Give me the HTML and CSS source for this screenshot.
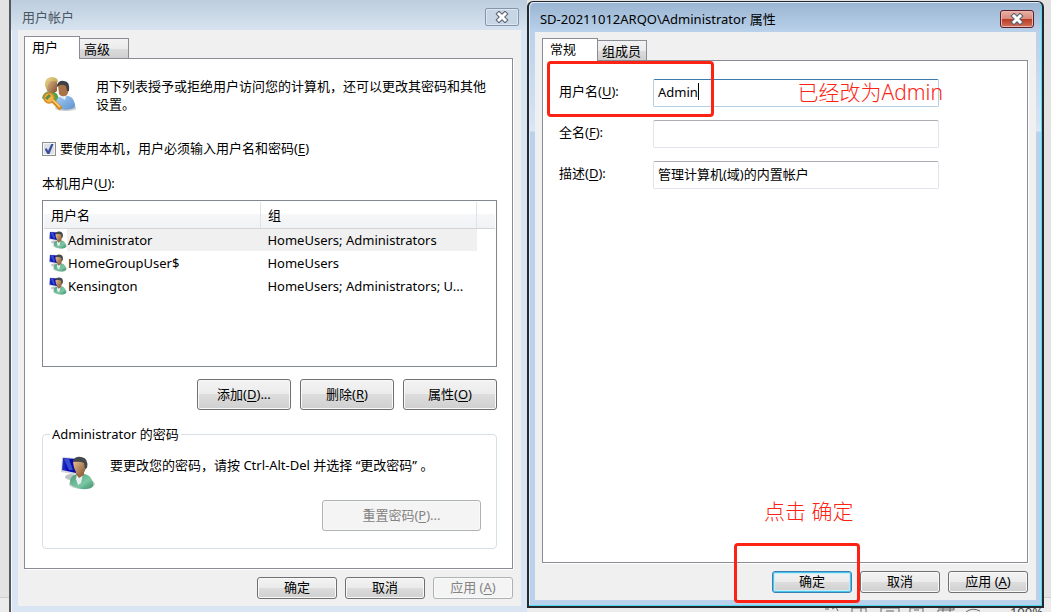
FILE: index.html
```html
<!DOCTYPE html>
<html lang="zh-CN">
<head>
<meta charset="utf-8">
<title>用户帐户</title>
<link rel="stylesheet" href="styles.css">
</head>
<body>
<svg class="defs" width="0" height="0" aria-hidden="true">
  <defs>
    <linearGradient id="screen" x1="0" y1="0" x2="1" y2="0"><stop offset="0" stop-color="#2338b8"/><stop offset=".35" stop-color="#0a10c0"/><stop offset="1" stop-color="#0508a0"/></linearGradient>
    <linearGradient id="skin" x1="0" y1="0" x2="1" y2="1"><stop offset="0" stop-color="#f0c898"/><stop offset="1" stop-color="#80502c"/></linearGradient>
    <linearGradient id="shirt" x1="0" y1="0" x2="1" y2="1"><stop offset="0" stop-color="#4c9a7c"/><stop offset=".6" stop-color="#7cc8a4"/><stop offset="1" stop-color="#3d8c6c"/></linearGradient>
    <linearGradient id="blueshirt" x1="0" y1="0" x2="1" y2="1"><stop offset="0" stop-color="#a8cdf4"/><stop offset="1" stop-color="#5c92cf"/></linearGradient>
    <linearGradient id="blond" x1="0" y1="0" x2="1" y2="1"><stop offset="0" stop-color="#efdc98"/><stop offset="1" stop-color="#a98a3a"/></linearGradient>
    <symbol id="pc-user" viewBox="0 0 34 34">
      <ellipse cx="21" cy="28" rx="13" ry="5" fill="#999" opacity=".45"/>
      <ellipse cx="10" cy="21" rx="6" ry="3" fill="#bfc3c6"/>
      <path d="M1 1L15 2L16 19L0 16Z" fill="#d5d8dc"/>
      <path d="M2 2L15 3L15 17L1 14Z" fill="url(#screen)"/>
      <path d="M3 3L8 3L12 14L8 14Z" fill="#4964d4" opacity=".75"/>
      <path d="M9 28Q8 19 17 18Q29 16 32 26Q34 32 26 33Q15 34 9 28Z" fill="url(#shirt)"/>
      <path d="M16 18L22 18L20 27L17 29L15 23Z" fill="#e7f2f3"/>
      <path d="M16 14H23V19L18 22L15 18Z" fill="#9c6840"/>
      <path d="M12 6Q13 3 19 3Q26 4 25 11Q24 18 19 19Q13 17 12 6Z" fill="url(#skin)"/>
      <path d="M12 5Q14 0 20 1Q28 2 26 12L24 13L23 7Q19 5 12 6Z" fill="#44484a"/>
    </symbol>
    <symbol id="cross" viewBox="0 0 14 12">
      <path d="M4 3L10 9M10 3L4 9" fill="none" stroke="#586070" stroke-width="5" stroke-linecap="square"/>
      <path d="M4 3L10 9M10 3L4 9" fill="none" stroke="#fff" stroke-width="3" stroke-linecap="square"/>
    </symbol>
  </defs>
</svg>

<div class="statusbar" aria-hidden="true">
  <svg width="180" height="5" viewBox="0 0 180 5" fill="none" stroke="#66686a" stroke-width="1"><path d="M1 2H5M8 2L12 0L14 4M28 6V1H42V6M37 1V6M57 6V1H75V6M62 4H70M86 6V1H99V6M90 3H95M114 1H130V3H114V6M119 1V6M126 1V6M142 5Q148 0 156 4"/></svg>
  <span class="zoom-level">100%</span>
</div>

<main class="desktop">
  <section class="window accounts">
    <header class="titlebar">
      <h1>用户帐户</h1>
      <button class="close" type="button" aria-label="关闭"><svg width="14" height="12"><use href="#cross"/></svg></button>
    </header>
    <div class="client">
      <div class="tabs">
        <button class="tab active" type="button">用户</button>
        <button class="tab" type="button">高级</button>
      </div>
      <div class="panel">
        <div class="intro">
          <svg width="34" height="34" viewBox="0 0 34 34" aria-hidden="true">
            <ellipse cx="24" cy="31" rx="11" ry="3" fill="#999" opacity=".5"/>
            <path d="M0 21Q1 15 8 14Q17 14 17 25Q5 27 0 21Z" fill="#57a34b"/>
            <path d="M4 3Q10 -2 15 3L15 14Q11 18 5 14Z" fill="url(#skin)"/>
            <path d="M3 9Q2 1 9 0Q16 0 16 5L11 4Q7 4 6 8L5 13Z" fill="url(#blond)"/>
            <path d="M14 30Q12 20 21 19Q31 17 33 27Q34 31 29 32Q20 34 14 30Z" fill="url(#blueshirt)"/>
            <path d="M18 17H25L23 23L18 20Z" fill="#e1edf8"/>
            <path d="M16 8Q19 4 26 6Q28 13 25 18Q20 21 17 17Z" fill="#a97146"/>
            <path d="M15 8Q17 3 22 4Q28 4 27 14L25 14L24 9Q19 6 15 10Z" fill="#3c4044"/>
            <circle cx="7" cy="21" r="5" fill="#efb54a" stroke="#d68b22" stroke-width="1.4"/>
            <path d="M4 22L8 18" stroke="#638b42" stroke-width="3"/>
            <path d="M11 24L19 32" stroke="#d58c20" stroke-width="4"/>
            <path d="M11 23L18 30" stroke="#ffd574" stroke-width="1.5"/>
          </svg>
          <p>用下列表授予或拒绝用户访问您的计算机，还可以更改其密码和其他设置。</p>
        </div>
        <label class="check"><input type="checkbox" checked><span>要使用本机，用户必须输入用户名和密码(<u>E</u>)</span></label>
        <p class="list-label" id="users-label">本机用户(<u>U</u>):</p>
        <div class="listbox">
          <table aria-labelledby="users-label">
            <colgroup><col class="col-name"><col class="col-group"><col class="col-rest"></colgroup>
            <thead><tr><th>用户名</th><th>组</th><th></th></tr></thead>
            <tbody>
              <tr class="selected"><td><div class="user"><svg width="18" height="18"><use href="#pc-user"/></svg>Administrator</div></td><td>HomeUsers; Administrators</td><td></td></tr>
              <tr><td><div class="user"><svg width="18" height="18"><use href="#pc-user"/></svg>HomeGroupUser$</div></td><td>HomeUsers</td><td></td></tr>
              <tr><td><div class="user"><svg width="18" height="18"><use href="#pc-user"/></svg>Kensington</div></td><td>HomeUsers; Administrators; U...</td><td></td></tr>
            </tbody>
          </table>
        </div>
        <div class="actions">
          <button class="btn" type="button">添加(<u>D</u>)...</button>
          <button class="btn" type="button">删除(<u>R</u>)</button>
          <button class="btn" type="button">属性(<u>O</u>)</button>
        </div>
        <fieldset>
          <legend>Administrator 的密码</legend>
          <div class="password">
            <svg width="34" height="34" aria-hidden="true"><use href="#pc-user"/></svg>
            <p>要更改您的密码，请按 Ctrl-Alt-Del 并选择 “更改密码” 。</p>
          </div>
          <button class="btn reset" type="button" disabled>重置密码(<u>P</u>)...</button>
        </fieldset>
      </div>
      <footer>
        <button class="btn" type="button">确定</button>
        <button class="btn" type="button">取消</button>
        <button class="btn" type="button" disabled>应用 (<u>A</u>)</button>
      </footer>
    </div>
  </section>

  <section class="window properties">
    <header class="titlebar">
      <h2>SD-20211012ARQO\Administrator 属性</h2>
      <button class="close" type="button" aria-label="关闭"><svg width="14" height="12"><use href="#cross"/></svg></button>
    </header>
    <div class="client">
      <div class="tabs">
        <button class="tab active" type="button">常规</button>
        <button class="tab" type="button">组成员</button>
      </div>
      <div class="panel">
        <form class="fields">
          <div class="field">
            <label for="username">用户名(<u>U</u>):</label>
            <span class="input-wrap"><input class="focused" id="username" type="text" value="Admin"><span class="caret"></span><span class="note">已经改为Admin</span></span>
            <span class="mark"></span>
          </div>
          <div class="field"><label for="fullname">全名(<u>F</u>):</label><input id="fullname" type="text"></div>
          <div class="field"><label for="description">描述(<u>D</u>):</label><input id="description" type="text" value="管理计算机(域)的内置帐户"></div>
        </form>
      </div>
      <footer>
        <span class="confirm"><button class="btn default" type="button">确定</button><span class="note">点击 确定</span><span class="mark"></span></span>
        <button class="btn" type="button">取消</button>
        <button class="btn" type="button">应用 (<u>A</u>)</button>
      </footer>
    </div>
  </section>
</main>
</body>
</html>
```
FILE: styles.css
```css
* { box-sizing: border-box; }

body {
  margin: 0;
  background: #e3e3e3;
  color: #000;
  font: 13px/18px "Noto Sans", "Noto Sans CJK SC", sans-serif;
  overflow: hidden;
}

h1, h2, p { margin: 0; font-size: 13px; font-weight: 400; }
button, input { font: inherit; color: inherit; }
u { text-underline-offset: 2px; }

.defs { position: absolute; }

.desktop {
  position: relative;
  display: flex;
  min-height: 100vh;
  padding: 0 7px 0 9px;
}

.statusbar {
  position: absolute;
  inset: auto 0 0 0;
  display: flex;
  justify-content: flex-end;
  align-items: flex-end;
  gap: 6px;
  height: 15px;
  padding-right: 8px;
  overflow: hidden;
  border-top: 1px solid #cfcfcf;
  background: #ececec;
}

.zoom-level { height: 7px; color: #444; line-height: 14px; }

/* Windows */
.window { display: flex; flex-direction: column; min-width: 0; }

.accounts {
  flex: 519;
  padding: 0 6px 6px 7px;
  border-left: 2px solid #55595e;
  background: #d9e5f2;
  box-shadow: inset 1px 0 #f4f9fd;
}

.properties {
  flex: 517;
  margin: 1px 0 4px;
  padding: 0 6px 6px;
  border: 2px solid #25282c;
  border-top-width: 1px;
  border-radius: 6px 6px 0 0;
  background: linear-gradient(#9ab5d2, #b9d1ea 30px, #d5e3f4 120px, #dce8f6 129px, #b9d1ea 130px);
  box-shadow: inset -1px -1px #4ddcf2, inset 1px 1px #dceafa;
}

.titlebar {
  display: flex;
  justify-content: space-between;
  align-items: flex-start;
}

.accounts .titlebar {
  height: 30px;
  margin: 0 -6px 0 -7px;
  padding: 8px 8px 0 11px;
  background: linear-gradient(#bccddd, #d7e3f0);
}

.properties .titlebar { height: 30px; padding: 8px 2px 0 5px; }

.titlebar h1 { color: #4c5663; }

.close {
  display: grid;
  place-items: center;
  width: 34px;
  height: 18px;
  padding: 0;
  border: 1px solid #8795aa;
  border-radius: 2px;
  background: #c7d6e5;
  box-shadow: inset 0 0 0 1px #dbe6f0;
}

.properties .close {
  border-color: #571f29;
  border-radius: 3px;
  background: linear-gradient(#eab0a5, #d98b7c 48%, #b73a24 50%, #d27059);
  box-shadow: inset 0 0 0 1px #e9b5ac;
}

.client {
  display: flex;
  flex: 1;
  flex-direction: column;
  padding: 6px 8px 7px 6px;
  background: #f0f0f0;
}

.properties .client { padding-left: 7px; }

/* Tabs */
.tabs { display: flex; align-items: flex-end; height: 22px; }

.tab {
  height: 20px;
  padding: 0 4px;
  border: 1px solid #898c95;
  border-bottom: 0;
  border-left: 0;
  background: linear-gradient(#f2f2f2, #ebebeb 50%, #dcdcdc 51%, #cfcfcf);
}

.tab:last-child { min-width: 49px; padding-top: 1px; text-align: left; }

.tab.active {
  position: relative;
  width: 56px;
  height: 23px;
  margin-bottom: -1px;
  padding: 0 0 2px 7px;
  border-left: 1px solid #898c95;
  background: #fff;
  text-align: left;
}

.panel {
  display: flex;
  flex: 1;
  flex-direction: column;
  border: 1px solid #898c95;
  background: #fff;
  box-shadow: 1px 1px #fff;
}

.accounts .panel { padding: 18px 15px 19px 17px; }

.intro { display: flex; gap: 20px; height: 62px; padding-right: 8px; }
.intro svg, .password svg { flex: none; }
.check { display: flex; align-items: center; gap: 4px; height: 18px; }

.check input {
  appearance: none;
  display: grid;
  place-items: center;
  width: 14px;
  height: 14px;
  margin: 2px 0 0;
  border: 1px solid #8e8f8f;
  background: #dde1e6;
  box-shadow: inset 0 0 0 1px #f5f5f5;
}

.check input:checked::before {
  content: "";
  width: 9px;
  height: 10px;
  background: #3a4f9b;
  clip-path: polygon(0 50%, 25% 42%, 40% 67%, 75% 0, 100% 0, 55% 100%, 32% 100%);
}

.list-label { margin: 17px 0 8px; }

/* User list */
.listbox {
  height: 167px;
  padding: 1px;
  border: 1px solid #828790;
}

table { width: 100%; border-collapse: collapse; table-layout: fixed; }
.col-name { width: 48%; }
.col-group { width: 48%; }
.col-rest { width: 4%; }
th, td { height: 23px; padding: 0 7px; font-weight: 400; text-align: left; white-space: nowrap; }

th {
  height: 26px;
  border-right: 1px solid #dfe2e6;
  border-bottom: 1px solid #d5d5d5;
  background: linear-gradient(#fff 45%, #f6f7f9 46%, #f1f2f4);
}

th:last-child { border-right: 0; }
td:first-child { padding-left: 5px; }
.user { display: flex; align-items: center; gap: 1px; }
.selected td { background: #f0f0f0; }
.selected td:first-child { background: linear-gradient(to right, #fff 23px, #f0f0f0 23px); }
.selected td:last-child { background: #fff; }

/* Buttons */
.btn {
  height: 22px;
  padding: 0 4px 2px;
  border: 1px solid #707070;
  border-radius: 3px;
  background: linear-gradient(#f3f3f3, #ebebeb 49%, #dddddd 50%, #cfcfcf);
  box-shadow: inset 0 0 0 1px #f9f9f9;
  line-height: 18px;
  white-space: nowrap;
}

.btn:disabled { border-color: #adb2b5; background: #f4f4f4; color: #838383; }

.btn.default {
  border-color: #3c7fb1;
  box-shadow: inset 0 0 0 1px #48c4ec, inset 0 0 0 2px #c3edf9;
}

.actions { display: flex; justify-content: flex-end; gap: 9px; margin: 12px 0 15px; }
.actions .btn { width: 94px; height: 31px; }

fieldset {
  flex: 1;
  display: flex;
  flex-direction: column;
  min-width: 0;
  margin: 0;
  padding: 13px 15px 17px 18px;
  border: 1px solid #d5dfe5;
  border-radius: 4px;
}

legend { margin-left: -11px; padding: 0 2px; }
.password { display: flex; gap: 15px; height: 44px; }
.reset { align-self: flex-end; width: 159px; height: 31px; }

footer { display: flex; justify-content: flex-end; gap: 8px; padding-top: 8px; }
footer .btn { width: 80px; }

/* Properties form */
.fields { display: grid; gap: 13px; padding: 18px 88px 0 16px; }
.field { position: relative; display: grid; grid-template-columns: 94px 1fr; align-items: center; }
.field label { padding-bottom: 4px; }
.input-wrap { position: relative; display: grid; }

.field input {
  width: 100%;
  height: 28px;
  padding: 0 4px 3px;
  border: 1px solid #e2e3ea;
  border-top-color: #abadb3;
  border-radius: 2px;
  outline: 0;
  background: #fff;
}

.field input.focused {
  border-color: #b5cfe7;
  border-top-color: #3d7bad;
}

.caret { position: absolute; top: 4px; left: 45px; width: 1px; height: 17px; background: #000; }

/* Annotations */
.note {
  position: absolute;
  color: #fd2314;
  font-size: 21px;
  font-weight: 300;
  line-height: 28px;
  white-space: nowrap;
}

.field .note { top: -1px; right: -4px; }

.mark {
  position: absolute;
  border: 3px solid #fd2314;
  border-radius: 4px;
}

.field .mark { top: -18px; left: -12px; width: 167px; height: 56px; }
.confirm { position: relative; display: flex; }
.confirm .note { top: -74px; left: -8px; }
.confirm .mark { inset: -28px -8px -10px -38px; }
```
